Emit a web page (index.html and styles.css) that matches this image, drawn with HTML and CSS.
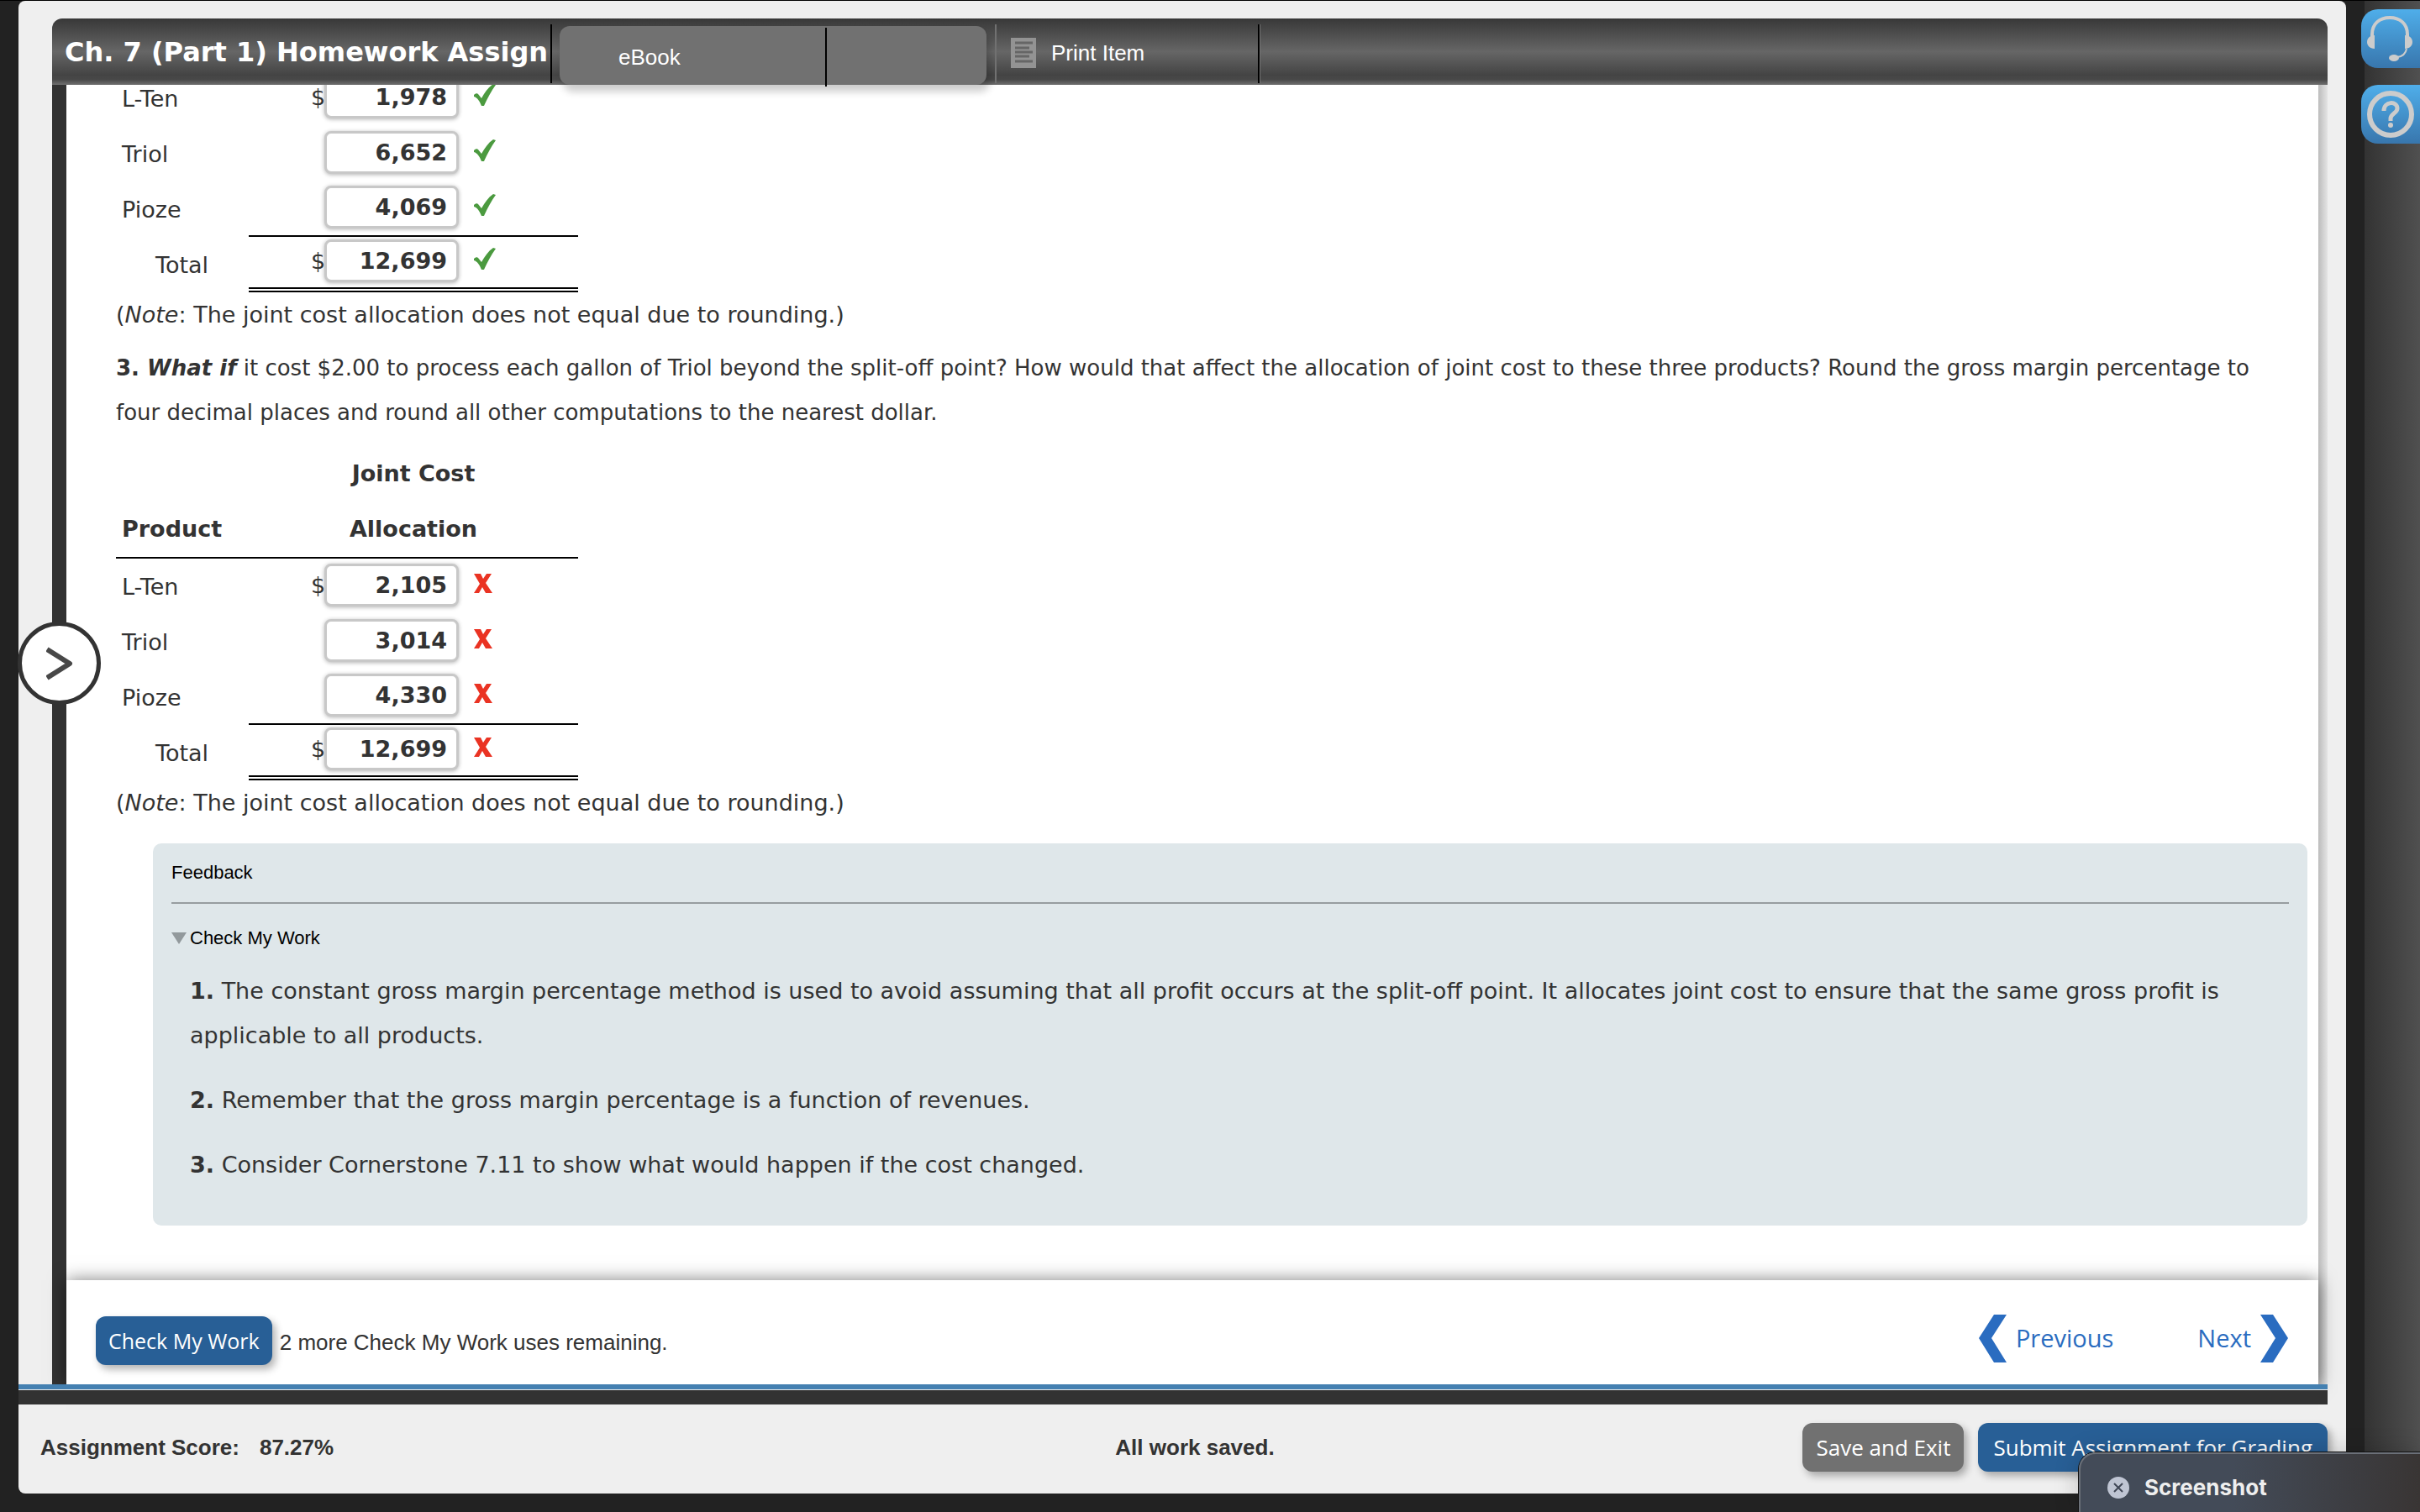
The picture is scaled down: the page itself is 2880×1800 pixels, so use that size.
FILE: index.html
```html
<!DOCTYPE html>
<html lang="en">
<head>
    <meta charset="UTF-8">
    <meta name="viewport" content="width=device-width, initial-scale=1.0">
    <title>Ch. 7 (Part 1) Homework Assignment</title>
    <link rel="stylesheet" href="styles.css">
</head>
<body>

    <!-- shared icons -->
    <svg class="sprite" aria-hidden="true">
        <symbol id="icon-check" viewBox="0 0 26 27">
            <path d="M0 13C2 11 4 11 5 12L9 17C13 10 17 4 23 0L26 1C21 8 16 17 12 26H9C7 21 4 16 0 15Z" fill="#4b9a3f"/>
        </symbol>
        <symbol id="icon-wrong" viewBox="0 0 22 23">
            <path d="M0 0H8L11 6L15 0H21L14 11L22 23H14L10 16L6 23H0L7 12Z" fill="#ea3323"/>
        </symbol>
    </svg>

    <div class="window">
        <div class="sheet">
            <header class="toolbar">
                <h1 class="title">Ch. 7 (Part 1) Homework Assign</h1>
                <nav class="tabs">
                    <a class="tab" href="#">eBook</a>
                </nav>
                <button class="print">
                    <svg width="30" height="36" viewBox="0 0 30 36" aria-hidden="true">
                        <rect width="30" height="36" fill="#939393"/>
                        <path d="M5 6H26M5 12H22M5 17H26M5 22H22M5 28H26" stroke="#666" stroke-width="3"/>
                    </svg>
                    Print Item
                </button>
            </header>

            <div class="sheet-body">
                <main class="content">
                    <div class="scrolled">
                        <table class="costs">
                            <tr>
                                <td><label for="a1">L-Ten</label></td>
                                <td><div class="answer"><span class="sign">$</span><input id="a1" type="text" value="1,978"><svg class="mark"><use href="#icon-check"/></svg></div></td>
                            </tr>
                            <tr>
                                <td><label for="a2">Triol</label></td>
                                <td><div class="answer"><span class="sign"></span><input id="a2" type="text" value="6,652"><svg class="mark"><use href="#icon-check"/></svg></div></td>
                            </tr>
                            <tr>
                                <td><label for="a3">Pioze</label></td>
                                <td><div class="answer"><span class="sign"></span><input id="a3" type="text" value="4,069"><svg class="mark"><use href="#icon-check"/></svg></div></td>
                            </tr>
                            <tr class="total">
                                <td><label for="a4">Total</label></td>
                                <td><div class="answer"><span class="sign">$</span><input id="a4" type="text" value="12,699"><svg class="mark"><use href="#icon-check"/></svg></div></td>
                            </tr>
                        </table>

                        <p class="note">(<i>Note</i>: The joint cost allocation does not equal due to rounding.)</p>

                        <p class="question"><b>3. <i>What if</i></b> it cost $2.00 to process each gallon of Triol beyond the split-off point? How would that affect the allocation of joint cost to these three products? Round the gross margin percentage to four decimal places and round all other computations to the nearest dollar.</p>

                        <table class="costs">
                            <thead>
                                <tr>
                                    <th>Product</th>
                                    <th>Joint Cost<br>Allocation</th>
                                </tr>
                            </thead>
                            <tbody>
                                <tr>
                                    <td><label for="b1">L-Ten</label></td>
                                    <td><div class="answer"><span class="sign">$</span><input id="b1" type="text" value="2,105"><svg class="mark wrong"><use href="#icon-wrong"/></svg></div></td>
                                </tr>
                                <tr>
                                    <td><label for="b2">Triol</label></td>
                                    <td><div class="answer"><span class="sign"></span><input id="b2" type="text" value="3,014"><svg class="mark wrong"><use href="#icon-wrong"/></svg></div></td>
                                </tr>
                                <tr>
                                    <td><label for="b3">Pioze</label></td>
                                    <td><div class="answer"><span class="sign"></span><input id="b3" type="text" value="4,330"><svg class="mark wrong"><use href="#icon-wrong"/></svg></div></td>
                                </tr>
                                <tr class="total">
                                    <td><label for="b4">Total</label></td>
                                    <td><div class="answer"><span class="sign">$</span><input id="b4" type="text" value="12,699"><svg class="mark wrong"><use href="#icon-wrong"/></svg></div></td>
                                </tr>
                            </tbody>
                        </table>

                        <p class="note">(<i>Note</i>: The joint cost allocation does not equal due to rounding.)</p>

                        <section class="feedback">
                            <h2>Feedback</h2>
                            <details open>
                                <summary>
                                    <svg width="18" height="14" viewBox="0 0 18 14" aria-hidden="true"><path d="M0 0H18L9 14Z" fill="#92999c"/></svg>
                                    Check My Work
                                </summary>
                                <p><b>1.</b> The constant gross margin percentage method is used to avoid assuming that all profit occurs at the split-off point. It allocates joint cost to ensure that the same gross profit is applicable to all products.</p>
                                <p><b>2.</b> Remember that the gross margin percentage is a function of revenues.</p>
                                <p><b>3.</b> Consider Cornerstone 7.11 to show what would happen if the cost changed.</p>
                            </details>
                        </section>
                    </div>
                </main>

                <div class="actions">
                    <button class="btn btn-check">Check My Work</button>
                    <span class="remaining">2 more Check My Work uses remaining.</span>
                    <nav class="pager">
                        <a href="#">
                            <svg width="33" height="57" viewBox="0 0 33 57" aria-hidden="true"><path d="M18 0H33L15 28L33 57H18L0 28Z" fill="#2a6cc0"/></svg>
                            Previous
                        </a>
                        <a href="#">
                            Next
                            <svg width="33" height="57" viewBox="0 0 33 57" aria-hidden="true"><path d="M15 0H0L18 28L0 57H15L33 28Z" fill="#2a6cc0"/></svg>
                        </a>
                    </nav>
                </div>

                <button class="handle" aria-label="Open navigation">
                    <svg width="32" height="40" viewBox="0 0 32 40" aria-hidden="true"><path d="M1 3L28 20L1 37" fill="none" stroke="#484848" stroke-width="6" stroke-linejoin="round"/></svg>
                </button>
            </div>
        </div>

        <div class="divider"></div>

        <footer class="statusbar">
            <div class="score"><span>Assignment Score:</span><span>87.27%</span></div>
            <div class="saved">All work saved.</div>
            <div class="buttons">
                <button class="btn btn-grey">Save and Exit</button>
                <button class="btn btn-submit">Submit Assignment for Grading</button>
            </div>
        </footer>
    </div>

    <aside class="rail">
        <button aria-label="Support">
            <svg width="54" height="56" viewBox="0 0 54 56" aria-hidden="true">
                <path d="M6 26V23C6 10 15 3 27 3S48 10 48 23V26" fill="none" stroke="#ccc" stroke-width="4"/>
                <path d="M9 24V40C3 40 0 36 0 32S3 24 9 24ZM45 24V40C51 40 54 36 54 32S51 24 45 24Z" fill="#ccc"/>
                <path d="M47 40C46 46 43 49 36 50" fill="none" stroke="#ccc" stroke-width="2"/>
                <ellipse cx="32" cy="51" rx="6" ry="4" fill="#ccc"/>
            </svg>
        </button>
        <button aria-label="Help">
            <svg width="56" height="56" viewBox="0 0 56 56" aria-hidden="true">
                <circle cx="28" cy="28" r="25" fill="none" stroke="#ccc" stroke-width="6"/>
                <path d="M20 24C20 12 36 12 36 21C36 27 28 27 28 33V36" fill="none" stroke="#ccc" stroke-width="5"/>
                <circle cx="28" cy="41" r="3" fill="#ccc"/>
            </svg>
        </button>
    </aside>

    <div class="toast">
        <button aria-label="Close">
            <svg width="26" height="26" viewBox="0 0 26 26" aria-hidden="true">
                <circle cx="13" cy="13" r="13" fill="#bfc5d3"/>
                <path d="M8 8L18 18M18 8L8 18" stroke="#3f4655" stroke-width="2"/>
            </svg>
        </button>
        Screenshot
    </div>

</body>
</html>
```

FILE: styles.css
```css
* {
    box-sizing: border-box;
}
body {
    margin: 0;
    height: 100vh;
    display: flex;
    position: relative;
    overflow: hidden;
    border-top: 1px solid #000;
    background-color: #222;
    color: #333;
    font: 26px/32px "Liberation Sans", Arial, sans-serif;
}
button {
    border: 0;
    padding: 0;
    font: inherit;
    cursor: pointer;
}
a {
    text-decoration: none;
}
.sprite {
    display: none;
}

/* window */
.window {
    flex: 1;
    display: flex;
    flex-direction: column;
    margin: 0 22px;
    height: calc(100vh - 23px);
    border-radius: 8px;
    background-color: #efefef;
}
.sheet {
    flex: 1;
    min-height: 0;
    display: flex;
    flex-direction: column;
    margin: 21px 22px 0 40px;
}

/* toolbar */
.toolbar {
    position: relative;
    z-index: 1;
    display: flex;
    align-items: flex-start;
    height: 79px;
    border-radius: 12px 12px 0 0;
    background: linear-gradient(#383838, #666 50%, #444 85%, #484848 92%, #707070);
    color: #fff;
}
.title {
    width: 595px;
    height: 70px;
    margin: 7px 9px 0 0;
    padding-left: 15px;
    border-right: 2px solid #000;
    overflow: hidden;
    white-space: nowrap;
    font: bold 32px/66px "DejaVu Sans", Verdana, sans-serif;
}
.tabs {
    width: 508px;
    height: 70px;
    margin: 9px 10px 0 0;
    border-radius: 12px;
    background-color: #717171;
    box-shadow: 4px 8px 10px rgba(0, 0, 0, 0.2);
}
.tab {
    display: block;
    width: 318px;
    height: 70px;
    margin-top: 2px;
    padding-left: 70px;
    border-right: 2px solid #000;
    color: #fff;
    line-height: 70px;
}
.print {
    display: flex;
    align-items: center;
    gap: 18px;
    width: 315px;
    height: 70px;
    margin-top: 7px;
    padding: 0 0 2px 17px;
    border-left: 2px solid #717171;
    border-right: 2px solid #000;
    box-shadow: 1px 0 #777;
    background: none;
    color: #fff;
}

/* question pane */
.sheet-body {
    flex: 1;
    min-height: 0;
    display: flex;
    flex-direction: column;
    position: relative;
    padding-right: 11px;
    border-left: 17px solid #323232;
    background: linear-gradient(to left, #e4e4e4, #bcbcbc 11px);
}
.content {
    flex: 1;
    min-height: 0;
    overflow: hidden;
    background-color: #fff;
    font: 27px/53px "DejaVu Sans", Verdana, sans-serif;
}
.scrolled {
    margin-top: -17px;
    padding: 0 13px 0 59px;
}
.content p {
    margin: 0;
}
.costs {
    width: 550px;
    border-collapse: separate;
    border-spacing: 0;
    table-layout: fixed;
}
.costs td,
.costs th {
    height: 66px;
    padding: 0;
    vertical-align: top;
}
.costs td:first-child,
.costs th:first-child {
    width: 158px;
    padding: 7px 0 0 7px;
    text-align: left;
}
.costs th {
    height: 134px;
    border-bottom: 2px solid #000;
    vertical-align: bottom;
    line-height: 66px;
}
.costs th:first-child {
    padding-top: 0;
}
.costs td:last-child {
    padding: 6px 0 0 74px;
}
.costs tr:nth-child(3) td:last-child {
    padding-top: 5px;
    border-bottom: 2px solid #000;
}
.costs .total td:first-child {
    padding-left: 47px;
}
.costs .total td:last-child {
    padding-top: 3px;
    border-bottom: 6px double #000;
}
.answer {
    display: flex;
    align-items: center;
    height: 51px;
}
.sign {
    width: 16px;
    text-align: right;
}
.answer input {
    width: 160px;
    height: 51px;
    padding: 0 11px;
    border: 3px solid #c8c8c8;
    border-radius: 8px;
    box-shadow: 0 1px 5px rgba(0, 0, 0, 0.3);
    background-color: #fff;
    color: #333;
    text-align: right;
    font: bold 27px "DejaVu Sans", Verdana, sans-serif;
}
.mark {
    width: 26px;
    height: 27px;
    margin: 0 0 4px 18px;
}
.wrong {
    width: 22px;
    height: 23px;
}
.content .question {
    margin: 11px 40px 13px 0;
    font-size: 26px;
}

/* feedback */
.feedback {
    margin: 22px 0 0 44px;
    padding: 22px;
    border-radius: 10px;
    background-color: #dfe7ea;
}
.feedback h2,
.feedback summary {
    margin: 0;
    color: #000;
    font: 22px/26px "Liberation Sans", Arial, sans-serif;
}
.feedback h2 {
    margin-bottom: 28px;
    padding-bottom: 22px;
    border-bottom: 2px solid #979da0;
}
.feedback summary {
    display: flex;
    align-items: center;
    gap: 4px;
    list-style: none;
}
.feedback p {
    margin: 23px 0 24px 22px;
}

/* check my work + pager */
.actions {
    display: flex;
    align-items: center;
    height: 124px;
    padding: 20px 36px 0 35px;
    position: relative;
    background-color: #fff;
    box-shadow: 0 0 20px rgba(0, 0, 0, 0.5);
}
.remaining {
    margin: 4px auto 0 9px;
}
.btn {
    height: 58px;
    padding: 0 16px;
    border-radius: 12px;
    background-color: #285f96;
    box-shadow: 4px 5px 10px rgba(0, 0, 0, 0.3);
    color: #fff;
    font: 26px "Open Sans", sans-serif;
}
.btn-check {
    padding: 0 15px;
    font-size: 25px;
}
.btn-grey {
    background-color: #717171;
}
.btn-submit {
    padding: 0 18px;
}
.pager {
    display: flex;
    gap: 100px;
    margin-bottom: 6px;
    font: 29px/58px "Open Sans", sans-serif;
}
.pager a {
    display: flex;
    align-items: center;
    gap: 11px;
    color: #2a6cc0;
}
.handle {
    display: grid;
    place-items: center;
    position: absolute;
    left: -58px;
    top: 639px;
    width: 99px;
    height: 99px;
    border: 5px solid #333;
    border-radius: 50%;
    background-color: #fff;
}

/* bottom */
.divider {
    height: 24px;
    margin-right: 22px;
    border-top: 6px solid #4480b1;
    background-color: #323232;
    box-shadow: inset 0 1px #efefef;
    position: relative;
}
.statusbar {
    display: grid;
    grid-template-columns: 1fr auto 1fr;
    height: 106px;
    padding: 22px 22px 0 26px;
    font-weight: bold;
    line-height: 58px;
}
.score {
    display: flex;
    gap: 24px;
}
.saved {
    padding-left: 26px;
}
.buttons {
    display: flex;
    justify-content: flex-end;
    gap: 17px;
}

/* help buttons */
.rail {
    width: 66px;
    background: linear-gradient(to right, #333, #505050);
}
.rail button {
    display: grid;
    place-items: center start;
    width: 70px;
    height: 70px;
    margin: 10px 0 20px -4px;
    padding-left: 7px;
    border-radius: 20px 0 0 20px;
    background: linear-gradient(#4faeea, #3876ad);
}

.toast {
    display: flex;
    align-items: center;
    gap: 18px;
    position: absolute;
    right: 0;
    bottom: 0;
    width: 406px;
    height: 71px;
    padding: 10px 0 0 32px;
    border-top: 2px solid #6b7078;
    border-left: 2px solid #6b7078;
    border-radius: 20px 0 0 0;
    background: linear-gradient(to right, #434b58 45%, #393534);
    box-shadow: 0 0 0 1px #111, 0 0 30px rgba(0, 0, 0, 0.2);
    color: #eee;
    font: bold 26px Inter, sans-serif;
}
.toast button {
    display: flex;
    background: none;
}
```
